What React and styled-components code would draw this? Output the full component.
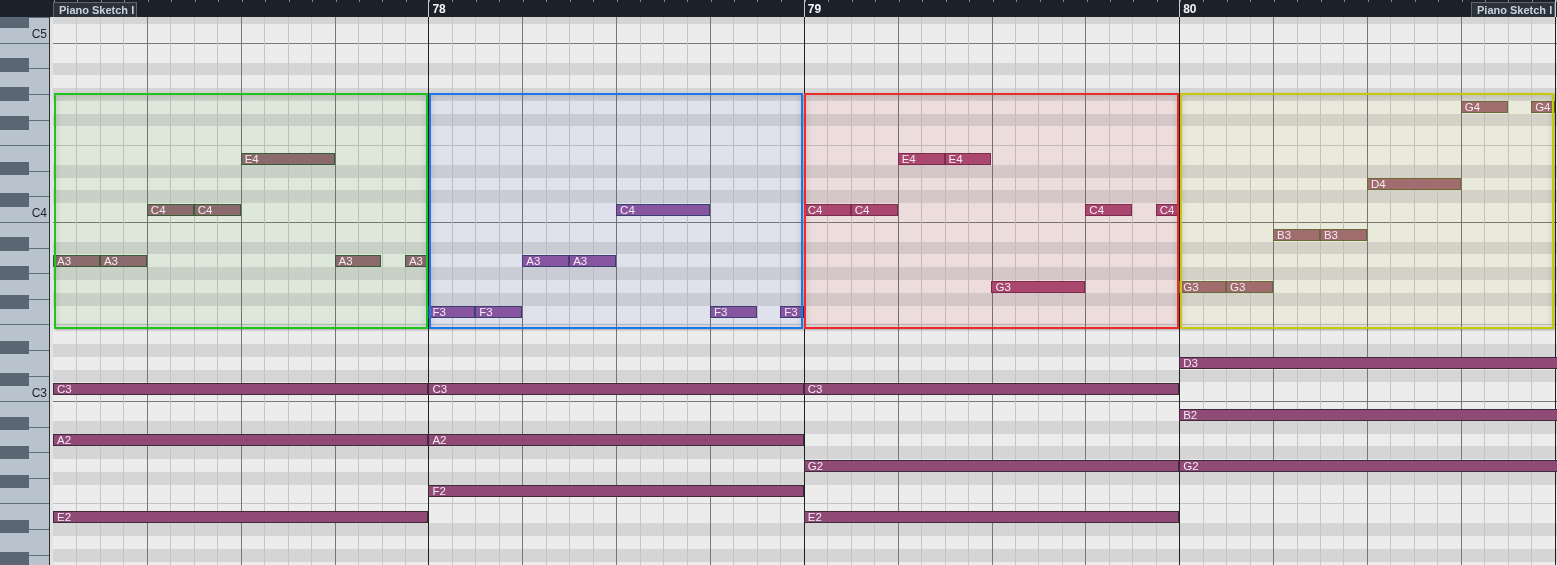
import React from 'react';
import styled, { createGlobalStyle, css } from 'styled-components';

// geometry of the key editor, in px
const U = 12.8; // one pitch band (white key row or black key row)
const BAND_TOP = -5.7; // top of the first (C#5) band, relative to the grid
const BAR = 375.4;
const STEP = BAR / 16;
const PART_TOP = 76;
const PART_H = 236;

const BAND_KINDS = [
  'black', 'white', 'oct', 'white', 'black', 'white', 'black',
  'white', 'black', 'white', 'ef', 'white', 'black', 'white',
];
const NOTE_OFFSET = { C: 15, D: 13, E: 11, F: 9, G: 7, A: 5, B: 3 };
const BLACK_BELOW = { B: 15, A: 18.4, G: 21.8, E: 16, D: 22.2 };
const WHITE_ORDER = ['D', 'C', 'B', 'A', 'G', 'F', 'E'];

const TONES = {
  green: { tint: 'rgb(239,250,236)', frame: '#1fc41f', note: '#8a6a6b', edge: '#3b5a3a' },
  blue: { tint: 'rgb(241,243,255)', frame: '#1b78e6', note: '#8755a0', edge: '#3c3f72' },
  red: { tint: 'rgb(255,238,238)', frame: '#ee2a2a', note: '#a9476f', edge: '#7c2c4c' },
  yellow: { tint: 'rgb(252,252,238)', frame: '#c9c90c', note: '#a06c6e', edge: '#6c6a38' },
  plain: { note: '#8f4a76', edge: '#3d2a3a' },
};

const parts = [
  {
    bar: 0,
    tone: 'green',
    notes: [['A3', 0, 2], ['A3', 2, 2], ['C4', 4, 2], ['C4', 6, 2], ['E4', 8, 4], ['A3', 12, 2], ['A3', 15, 1]],
  },
  {
    bar: 1,
    tone: 'blue',
    notes: [['F3', 0, 2], ['F3', 2, 2], ['A3', 4, 2], ['A3', 6, 2], ['C4', 8, 4], ['F3', 12, 2], ['F3', 15, 1]],
  },
  {
    bar: 2,
    tone: 'red',
    notes: [['C4', 0, 2], ['C4', 2, 2], ['E4', 4, 2], ['E4', 6, 2], ['G3', 8, 4], ['C4', 12, 2], ['C4', 15, 1]],
  },
  {
    bar: 3,
    tone: 'yellow',
    notes: [['G3', 0, 2], ['G3', 2, 2], ['B3', 4, 2], ['B3', 6, 2], ['D4', 8, 4], ['G4', 12, 2], ['G4', 15, 1]],
  },
];

const longNotes = [
  ['C3', 0], ['C3', 1], ['C3', 2],
  ['A2', 0], ['A2', 1],
  ['E2', 0], ['E2', 2],
  ['F2', 1],
  ['G2', 2], ['G2', 3],
  ['D3', 3], ['B2', 3],
];

const noteTop = (name) => {
  const octave = Number(name.slice(1));
  const idx = (4 - octave) * 14 + NOTE_OFFSET[name[0]];
  return BAND_TOP + idx * U + 0.5;
};

const whiteKeys = Array.from({ length: 24 }, (_, i) => {
  const letter = WHITE_ORDER[i % 7];
  const octave = 5 - Math.floor((i + 5) / 7);
  return { letter, octave };
});

const GlobalStyle = createGlobalStyle`
  html, body {
    margin: 0;
    padding: 0;
    background: #ececec;
    overflow: hidden;
  }
  body {
    font-family: "Liberation Sans", Arial, sans-serif;
  }
`;

const Root = styled.div`
  width: 1557px;
  height: 565px;
  display: flex;
  flex-direction: column;
  overflow: hidden;
`;

const Header = styled.header`
  height: 17px;
  flex: none;
  display: flex;
  background: #1c2129;
`;

const Corner = styled.div`
  width: 53px;
  flex: none;
`;

const RulerTrack = styled.div`
  position: relative;
  flex: 1;
  display: flex;
  overflow: hidden;
`;

const RulerBar = styled.div`
  width: ${BAR}px;
  flex: none;
  box-sizing: border-box;
  border-left: 1px solid ${(p) => (p.$first ? 'transparent' : '#c3ccd5')};
  padding: 3px 0 0 3px;
  color: #f4f6f8;
  font: bold 12px/12px "Liberation Sans", Arial, sans-serif;
  background-image: repeating-linear-gradient(
    90deg,
    #7d8893 0 1px,
    transparent 1px ${STEP}px
  );
  background-size: 100% 2px;
  background-repeat: no-repeat;
`;

const Tag = styled.div`
  position: absolute;
  top: 2px;
  ${(p) => (p.$right ? 'right: 2px;' : 'left: 0;')}
  width: 84px;
  height: 15px;
  box-sizing: border-box;
  padding: 0 5px;
  border: 1px solid #5d656e;
  border-bottom: none;
  background: #2c323a;
  color: #c6d4e2;
  font: bold 11px/14px "Liberation Sans", Arial, sans-serif;
  white-space: nowrap;
  overflow: hidden;
`;

const Body = styled.div`
  flex: 1;
  display: flex;
  min-height: 0;
`;

const Keyboard = styled.div`
  position: relative;
  width: 49px;
  flex: none;
  display: flex;
  flex-direction: column;
  background: #b9c3cd;
  overflow: hidden;

  & > :first-child {
    margin-top: ${BAND_TOP + U * 2.5 - U * 4}px;
  }
`;

const WhiteKey = styled.div`
  position: relative;
  height: ${U * 2}px;
  flex: none;

  &::after {
    content: '';
    position: absolute;
    left: ${(p) => (p.$full ? 0 : 29)}px;
    right: 0;
    bottom: -0.5px;
    height: 1px;
    background: #5f6b78;
  }
`;

const BlackKey = styled.div`
  position: absolute;
  left: 0;
  top: ${(p) => p.$offset}px;
  width: 29px;
  height: 13.3px;
  background: #5a6674;
  z-index: 1;
`;

const KeyLabel = styled.span`
  position: absolute;
  right: 2px;
  bottom: 3px;
  color: #1a2230;
  font: 12px/12px "Liberation Sans", Arial, sans-serif;
`;

const Divider = styled.div`
  width: 1px;
  flex: none;
  background: #2b3037;
`;

const Strip = styled.div`
  width: 3px;
  flex: none;
  background: #e3e3e3;
`;

const Grid = styled.div`
  position: relative;
  flex: 1;
  overflow: hidden;
`;

const Bands = styled.div`
  display: flex;
  flex-direction: column;
  margin-top: ${BAND_TOP}px;
`;

const Band = styled.div`
  position: relative;
  height: ${U}px;
  flex: none;
  background: ${(p) => (p.$kind === 'black' ? '#d5d5d5' : '#ececec')};

  ${(p) =>
    (p.$kind === 'oct' || p.$kind === 'ef') &&
    css`
      &::after {
        content: '';
        position: absolute;
        left: 0;
        right: 0;
        top: 50%;
        height: 1px;
        margin-top: -0.5px;
        background: ${p.$kind === 'oct' ? '#7a7a7a' : '#c4c4c4'};
      }
    `}
`;

const LineLayer = styled.div`
  position: absolute;
  inset: 0;
  display: flex;
  pointer-events: none;
`;

const BarCol = styled.div`
  width: ${BAR}px;
  flex: none;
  display: flex;
`;

const lineColor = (p) => {
  if (p.$index === 0) return p.$first ? 'transparent' : '#1f1f1f';
  if (p.$index % 4 === 0) return '#777777';
  return '#c5c5c5';
};

const StepLine = styled.div`
  flex: 1;
  border-left: 1px solid ${lineColor};
`;

const Part = styled.div`
  position: absolute;
  top: ${PART_TOP}px;
  height: ${PART_H}px;
`;

const Tint = styled.div`
  position: absolute;
  inset: 0;
  background: ${(p) => TONES[p.$tone].tint};
  mix-blend-mode: multiply;
`;

const Frame = styled.div`
  position: absolute;
  inset: 0;
  border: 2px solid ${(p) => TONES[p.$tone].frame};
  box-shadow: inset 0 0 6px rgba(0, 0, 0, 0.14), 1px 1px 2px rgba(0, 0, 0, 0.3);
`;

const Note = styled.div`
  position: absolute;
  height: 12px;
  box-sizing: border-box;
  padding-left: 3px;
  background: ${(p) => TONES[p.$tone].note};
  border: 1px solid ${(p) => TONES[p.$tone].edge};
  color: #f3ebf3;
  font: 11.5px/10px "Liberation Sans", Arial, sans-serif;
  white-space: nowrap;
  overflow: hidden;
`;

const Ruler = () => (
  <Header>
    <Corner />
    <RulerTrack>
      {[77, 78, 79, 80, 81].map((n, i) => (
        <RulerBar key={n} $first={i === 0}>
          {i > 0 && i < 4 ? n : null}
        </RulerBar>
      ))}
      <Tag>Piano Sketch I</Tag>
      <Tag $right>Piano Sketch I</Tag>
    </RulerTrack>
  </Header>
);

const Keys = () => (
  <Keyboard>
    {whiteKeys.map(({ letter, octave }, i) => (
      <WhiteKey key={i} $full={letter === 'C' || letter === 'F'}>
        {BLACK_BELOW[letter] !== undefined && <BlackKey $offset={BLACK_BELOW[letter]} />}
        {letter === 'C' && octave >= 3 && <KeyLabel>C{octave}</KeyLabel>}
      </WhiteKey>
    ))}
  </Keyboard>
);

const PartBox = ({ bar, tone, notes }) => {
  const left = bar * BAR + 0.5;
  return (
    <Part style={{ left, width: BAR - 1 }}>
      <Tint $tone={tone} />
      {notes.map(([name, step, len], i) => (
        <Note
          key={i}
          $tone={tone}
          style={{
            left: step * STEP - 0.5,
            top: noteTop(name) - PART_TOP,
            width: len * STEP,
          }}
        >
          {name}
        </Note>
      ))}
      <Frame $tone={tone} />
    </Part>
  );
};

export default function App() {
  return (
    <>
      <GlobalStyle />
      <Root>
        <Ruler />
        <Body>
          <Keys />
          <Divider />
          <Strip />
          <Grid>
            <Bands>
              {Array.from({ length: 46 }, (_, i) => (
                <Band key={i} $kind={BAND_KINDS[i % 14]} />
              ))}
            </Bands>
            <LineLayer>
              {[0, 1, 2, 3, 4].map((b) => (
                <BarCol key={b}>
                  {Array.from({ length: 16 }, (_, i) => (
                    <StepLine key={i} $index={i} $first={b === 0} />
                  ))}
                </BarCol>
              ))}
            </LineLayer>
            {parts.map((p) => (
              <PartBox key={p.bar} {...p} />
            ))}
            {longNotes.map(([name, bar], i) => (
              <Note
                key={i}
                $tone="plain"
                style={{
                  left: bar * BAR,
                  top: noteTop(name),
                  width: bar === 3 ? BAR + 20 : BAR,
                }}
              >
                {name}
              </Note>
            ))}
          </Grid>
        </Body>
      </Root>
    </>
  );
}
